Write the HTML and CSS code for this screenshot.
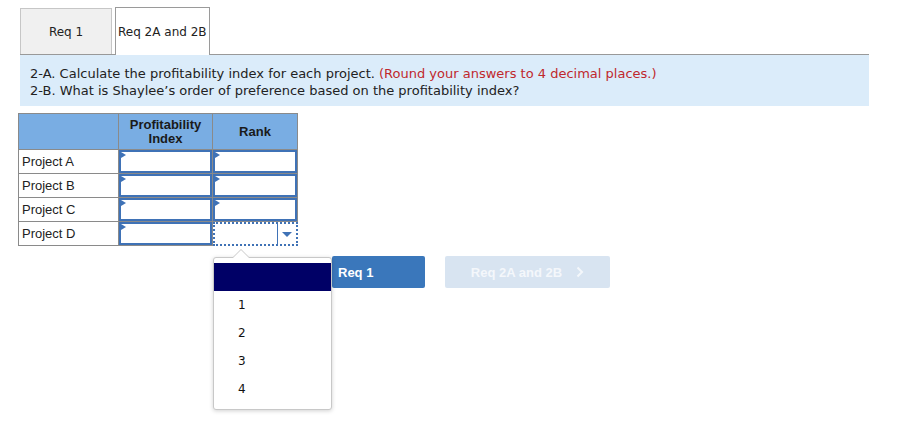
FILE: index.html
```html
<!DOCTYPE html>
<html>
<head>
<meta charset="utf-8">
<link rel="stylesheet" href="styles.css">
</head>
<body>
<div class="page">
  <div class="tabs">
    <div class="tab">Req 1</div>
    <div class="tab active">Req 2A and 2B</div>
  </div>
  <div class="prompt">
    <p>2-A. Calculate the profitability index for each project. <span class="note">(Round your answers to 4 decimal places.)</span></p>
    <p>2-B. What is Shaylee’s order of preference based on the profitability index?</p>
  </div>
  <table class="grid">
    <thead>
      <tr>
        <th class="c1"></th>
        <th class="c2">Profitability<br>Index</th>
        <th class="c3">Rank</th>
      </tr>
    </thead>
    <tbody>
      <tr><td class="label">Project A</td><td class="in"><div class="box"></div></td><td class="in"><div class="box"></div></td></tr>
      <tr><td class="label">Project B</td><td class="in"><div class="box"></div></td><td class="in"><div class="box"></div></td></tr>
      <tr><td class="label">Project C</td><td class="in"><div class="box"></div></td><td class="in"><div class="box"></div></td></tr>
      <tr><td class="label">Project D</td><td class="in"><div class="box"></div></td><td class="in sel"><div class="select"><span class="caret"></span></div></td></tr>
    </tbody>
  </table>
  <div class="nav">
    <button class="btn prev">Req 1</button>
    <button class="btn next">Req 2A and 2B<svg class="chev" width="8" height="12" viewBox="0 0 8 12"><polyline points="1.5,1.5 6,6 1.5,10.5" fill="none" stroke="#f4f7fb" stroke-width="2"/></svg></button>
  </div>
  <div class="dropdown">
    <div class="pointer"></div>
    <ul class="opts">
      <li class="opt hl">&nbsp;</li>
      <li class="opt">1</li>
      <li class="opt">2</li>
      <li class="opt">3</li>
      <li class="opt">4</li>
    </ul>
  </div>
</div>
</body>
</html>
```
FILE: styles.css
```css
html, body {
  min-height: 434px;
}
body {
  margin: 0;
  background: #fff;
  font-family: "DejaVu Sans", Verdana, sans-serif;
  color: #222;
}
.page {
  position: relative;
  width: 849px;
  min-height: 420px;
  padding: 7px 0 0 20px;
}
.tabs {
  display: flex;
  align-items: flex-end;
  gap: 3px;
  border-bottom: 1px solid #999;
  height: 47px;
}
.tab {
  box-sizing: border-box;
  min-width: 92px;
  height: 46px;
  padding: 0 2px;
  display: flex;
  align-items: center;
  justify-content: center;
  font-size: 12px;
  color: #222;
  background: #f0f0f0;
  border: 1px solid #c6c6c6;
  border-bottom: none;
}
.tab.active {
  background: #fff;
  height: 48px;
  margin-bottom: -1px;
  border-color: #9a9a9a;
  min-width: 93px;
}
.prompt {
  background: #dbecfa;
  padding: 10px 10px 7px;
  font-size: 13px;
  line-height: 17px;
}
.prompt p { margin: 0; }
.note { color: #c0282d; }
.grid {
  margin: 7px 0 0 -2px;
  border-collapse: collapse;
  font-family: "Liberation Sans", Arial, sans-serif;
  font-size: 13px;
}
.grid th, .grid td {
  border: 1px solid #8a8a8a;
  padding: 0;
}
.grid th {
  background: #79ade3;
  height: 35px;
  font-weight: bold;
  color: #1a1a1a;
  line-height: 14px;
  vertical-align: middle;
}
.c1 { width: 99px; }
.c2 { width: 93px; }
.c3 { width: 84px; }
.grid td { height: 23px; }
.label {
  padding-left: 3px !important;
  color: #222;
}
.in { position: relative; }
.box {
  box-sizing: border-box;
  height: 23px;
  border: 2px solid #3f72b6;
  background: #fff;
  position: relative;
}
.box::before {
  content: "";
  position: absolute;
  left: 0;
  top: 0;
  border-left: 5px solid #3f72b6;
  border-top: 3px solid transparent;
  border-bottom: 3px solid transparent;
}
.sel { border-color: transparent !important; }
.select {
  box-sizing: border-box;
  height: 24px;
  border: 2px dotted #3f72b6;
  position: relative;
  margin: 0 -1px -1px 0;
}
.select::after {
  content: "";
  position: absolute;
  right: 18px;
  top: 0;
  bottom: 0;
  border-left: 1px solid #3f72b6;
}
.caret {
  position: absolute;
  right: 4px;
  top: 8px;
  border-top: 5px solid #3f72b6;
  border-left: 5px solid transparent;
  border-right: 5px solid transparent;
}
.nav {
  display: flex;
  gap: 20px;
  margin: 10px 0 0 312px;
}
.btn {
  height: 32px;
  border: none;
  border-radius: 2px;
  font-family: "Liberation Sans", Arial, sans-serif;
  font-size: 13px;
  font-weight: bold;
  color: #fff;
  display: flex;
  align-items: center;
  padding: 0;
}
.prev {
  width: 93px;
  padding-left: 6px;
  background: #3a77bb;
}
.next {
  width: 165px;
  justify-content: center;
  background: #d8e4f1;
  color: #f4f7fb;
}
.chev {
  margin-left: 14px;
  display: block;
}
.dropdown {
  position: absolute;
  z-index: 10;
  left: 213px;
  top: 257px;
  width: 119px;
  box-sizing: border-box;
  height: 153px;
  background: #fff;
  border: 1px solid #c8c8c8;
  border-radius: 3px;
  box-shadow: 0 1px 4px rgba(0,0,0,0.18);
  padding-top: 5px;
  font-family: "DejaVu Sans", Verdana, sans-serif;
  font-size: 12px;
  color: #111;
}
.pointer {
  position: absolute;
  left: 18px;
  top: -9px;
  width: 0;
  height: 0;
  border-left: 9px solid transparent;
  border-right: 9px solid transparent;
  border-bottom: 9px solid #c8c8c8;
}
.pointer::after {
  content: "";
  position: absolute;
  left: -8px;
  top: 1px;
  border-left: 8px solid transparent;
  border-right: 8px solid transparent;
  border-bottom: 8px solid #fff;
}
.opts {
  list-style: none;
  margin: 0;
  padding: 0;
}
.opt {
  height: 28px;
  line-height: 28px;
  padding-left: 24px;
  color: #111;
}
.opt.hl {
  background: #000066;
}
```
